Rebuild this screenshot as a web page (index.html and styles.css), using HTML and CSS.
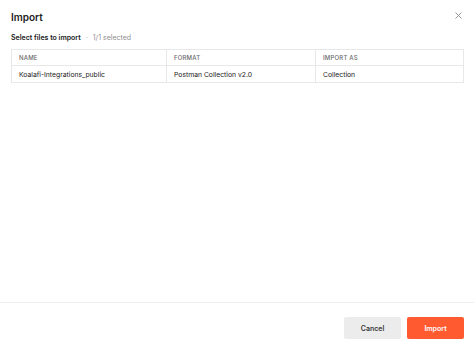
FILE: index.html
```html
<!DOCTYPE html>
<html>
<head>
<meta charset="utf-8">
<link rel="stylesheet" href="styles.css">
</head>
<body>
<div class="modal">
  <div class="modal-header">
    <h1 class="title">Import</h1>
    <button class="close" aria-label="Close">
      <svg width="7" height="7" viewBox="0 0 7 7"><path d="M0.5 0.5 L6.5 6.5 M6.5 0.5 L0.5 6.5" stroke="#8a8a8a" stroke-width="0.9" fill="none"/></svg>
    </button>
  </div>
  <div class="modal-body">
    <div class="subtitle">
      <span class="sub-strong">Select files to import</span>
      <span class="dot">·</span>
      <span class="sub-muted">1/1 selected</span>
    </div>
    <table class="files">
      <thead>
        <tr><th class="c1">NAME</th><th class="c2">FORMAT</th><th class="c3">IMPORT AS</th></tr>
      </thead>
      <tbody>
        <tr><td>Koalafi-Integrations_public</td><td>Postman Collection v2.0</td><td>Collection</td></tr>
      </tbody>
    </table>
  </div>
  <div class="modal-footer">
    <button class="btn btn-secondary">Cancel</button>
    <button class="btn btn-primary">Import</button>
  </div>
</div>
</body>
</html>
```
FILE: styles.css
```css
html, body {
  margin: 0;
  padding: 0;
  background: #ffffff;
}
body {
  font-family: Inter, "Noto Sans", sans-serif;
  color: #212121;
}
.modal {
  display: flex;
  flex-direction: column;
  height: 350px;
  width: 474px;
  box-sizing: border-box;
}
.modal-header {
  height: 32px;
  padding: 0 11px 0 11px;
  display: flex;
  align-items: center;
  justify-content: space-between;
}
.title {
  margin: 0;
  font-size: 10px;
  font-weight: 600;
  color: #212121;
  padding-top: 1px;
}
.close {
  border: 0;
  background: none;
  padding: 0;
  margin-right: 1px;
  display: flex;
  align-items: center;
  justify-content: center;
  width: 8px;
  height: 8px;
  margin-top: -2px;
}
.modal-body {
  flex: 1;
  padding: 0 10px 0 11px;
}
.subtitle {
  height: 12px;
  display: flex;
  align-items: center;
  gap: 4px;
  font-size: 7px;
  margin-top: -1px;
}
.sub-strong {
  font-weight: 600;
  color: #212121;
}
.dot {
  color: #b0b0b0;
  padding: 0 1px;
}
.sub-muted {
  color: #8f8f8f;
}
.files {
  margin-top: 6px;
  width: 453px;
  border-collapse: collapse;
  table-layout: fixed;
  font-size: 6.8px;
}
.files th, .files td {
  border: 1px solid #e8e8e8;
  text-align: left;
  padding: 0 7px;
  white-space: nowrap;
}
.files th {
  height: 15px;
  font-weight: 500;
  color: #6b6b6b;
  letter-spacing: 0.2px;
  font-size: 6px;
}
.files td {
  height: 16px;
  color: #212121;
}
.c1 { width: 140px; }
.c2 { width: 134px; }
.modal-footer {
  border-top: 1px solid #ededed;
  padding: 14px 10px 11px 11px;
  display: flex;
  justify-content: flex-end;
  gap: 6px;
}
.btn {
  width: 57px;
  height: 22px;
  border: 0;
  border-radius: 2px;
  font-family: Inter, "Noto Sans", sans-serif;
  font-size: 7px;
  font-weight: 600;
  padding: 0;
}
.btn-secondary {
  background: #ececec;
  color: #3a3a3a;
}
.btn-primary {
  background: #ff5a30;
  color: #ffffff;
}
```
